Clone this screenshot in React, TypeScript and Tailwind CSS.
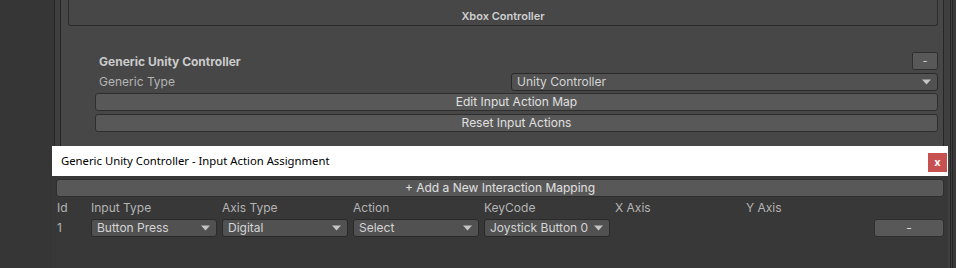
import React from "react";

const ui = { fontFamily: "Inter, 'Noto Sans', sans-serif" };

function Caret() {
  return (
    <svg width="9" height="6" viewBox="0 0 9 6" className="shrink-0">
      <path d="M0 0.5h9L4.5 5.5z" fill="#c4c4c4" />
    </svg>
  );
}

function Dropdown({ label, className = "" }: { label: string; className?: string }) {
  return (
    <div
      className={`flex h-[18px] items-center justify-between rounded-[3px] border border-[#2a2a2a] bg-[#515151] pl-[5px] pr-[6px] text-[12px] text-[#d4d4d4] ${className}`}
    >
      <span className="whitespace-nowrap">{label}</span>
      <Caret />
    </div>
  );
}

function Button({ label, className = "" }: { label: string; className?: string }) {
  return (
    <div
      className={`flex h-[18px] items-center justify-center rounded-[3px] border border-[#2e2e2e] bg-[#585858] text-[12px] text-[#e0e0e0] ${className}`}
    >
      {label}
    </div>
  );
}

const columns = ["Input Type", "Axis Type", "Action", "KeyCode", "X Axis", "Y Axis"];

export default function App() {
  return (
    <div className="relative flex h-[268px] w-[956px] overflow-hidden bg-[#363636]" style={ui}>
      {/* left editor chrome */}
      <div className="w-[54px] bg-[#363636]" />
      <div className="w-px bg-[#262626]" />
      <div className="w-[5px] bg-[#3f3f3f]" />
      <div className="w-px bg-[#262626]" />

      {/* inspector panel */}
      <div className="flex w-[882px] flex-col bg-[#474747]">
        <div className="ml-[7px] mr-[5px] flex h-[26px] items-end justify-center rounded-b-[3px] border-x border-b border-[#2b2b2b] pb-[3px]">
          <span className="text-[11px] font-semibold leading-none text-[#d0d0d0]">Xbox Controller</span>
        </div>

        <div className="mt-[26px] ml-[38px] mr-[5px] flex h-[18px] items-center justify-between">
          <span className="mt-[2px] text-[12px] font-bold text-[#cbcbcb]">Generic Unity Controller</span>
          <div className="flex h-[18px] w-[26px] items-center justify-center rounded-[2px] border border-[#2e2e2e] bg-[#585858] text-[11px] text-[#d0d0d0]">
            -
          </div>
        </div>

        <div className="mt-[3px] ml-[34px] mr-[5px] flex h-[17px] items-center">
          <span className="w-[416px] pl-[4px] text-[12px] text-[#b4b4b4]">Generic Type</span>
          <Dropdown label="Unity Controller" className="h-[17px] flex-1" />
        </div>

        <Button label="Edit Input Action Map" className="mt-[3px] ml-[34px] mr-[5px]" />
        <Button label="Reset Input Actions" className="mt-[3px] ml-[34px] mr-[5px]" />
      </div>

      {/* right editor chrome */}
      <div className="w-px bg-[#262626]" />
      <div className="w-[6px] bg-[#3f3f3f]" />
      <div className="w-px bg-[#262626]" />
      <div className="w-px bg-[#3f3f3f]" />
      <div className="w-px bg-[#262626]" />
      <div className="w-[3px] bg-[#3a3a3a]" />

      {/* floating window */}
      <div className="absolute left-[52px] top-[146px] flex h-[122px] w-[896px] flex-col bg-[#383838]">
        <div className="flex h-[30px] items-start justify-between bg-white">
          <span
            className="mt-[7px] pl-[9px] text-[11.3px] text-black"
            style={{ fontFamily: "'Noto Sans', 'Open Sans', sans-serif" }}
          >
            Generic Unity Controller - Input Action Assignment
          </span>
          <div className="mt-[7px] mr-[1px] flex h-[19px] w-[19px] items-center justify-center bg-[#c75050] text-[11px] font-bold leading-none text-white">
            x
          </div>
        </div>

        <Button label="+ Add a New Interaction Mapping" className="mt-[3px] mx-[4px]" />

        <div className="mt-[3px] flex h-[16px] items-center text-[12px] text-[#b4b4b4]">
          <span className="w-[39px] pl-[5px]">Id</span>
          {columns.map((c) => (
            <span key={c} className="w-[131px]">
              {c}
            </span>
          ))}
        </div>

        <div className="mt-[3px] flex h-[18px] items-center text-[12px] text-[#b4b4b4]">
          <span className="w-[39px] pl-[5px]">1</span>
          <Dropdown label="Button Press" className="mr-[5px] w-[126px]" />
          <Dropdown label="Digital" className="mr-[5px] w-[126px]" />
          <Dropdown label="Select" className="mr-[5px] w-[126px]" />
          <Dropdown label="Joystick Button 0" className="w-[126px]" />
          <Button label="-" className="ml-auto mr-[4px] w-[70px]" />
        </div>
      </div>
    </div>
  );
}
